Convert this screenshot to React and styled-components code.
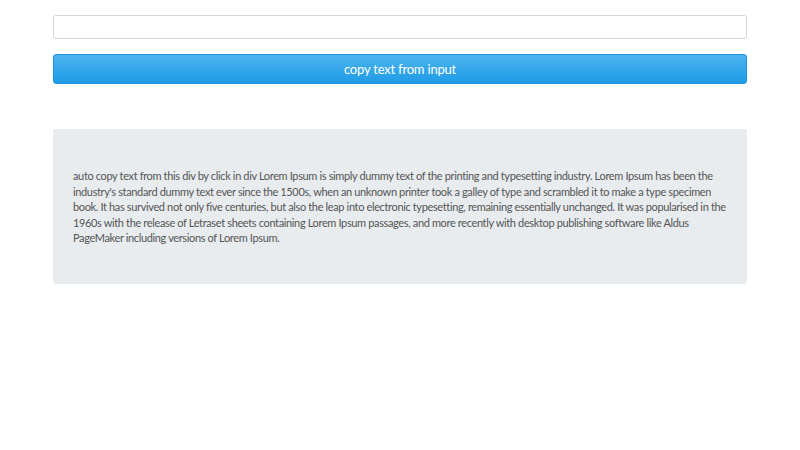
import React from "react";
import styled, { createGlobalStyle } from "styled-components";

const Global = createGlobalStyle`
  html, body { margin: 0; padding: 0; background: #fff; }
  body { font-family: Lato, "Open Sans", sans-serif; }
  * { box-sizing: border-box; }
`;

const Page = styled.div`
  width: 800px;
  padding: 15px 53px;
  display: flex;
  flex-direction: column;
`;

const Input = styled.input`
  height: 24px;
  width: 100%;
  border: 1px solid #d6d6d6;
  border-radius: 3px;
  background: #fff;
  outline: none;
  padding: 0 8px;
  font-family: inherit;
`;

const Button = styled.button`
  margin-top: 15px;
  height: 30px;
  width: 100%;
  border: 1px solid #1f92d9;
  border-radius: 3px;
  background: linear-gradient(to bottom, #4db4ef 0%, #1e9be6 100%);
  color: #fff;
  font-family: inherit;
  font-size: 13px;
  letter-spacing: -0.2px;
  cursor: pointer;
  padding: 0;
`;

const TextBox = styled.div`
  margin-top: 45px;
  height: 155px;
  background: #e8ecef;
  border-radius: 3px;
  padding: 39px 20px 0;
  color: #555;
  font-size: 11px;
  letter-spacing: -0.36px;
  line-height: 15.5px;
`;

export default function App() {
  return (
    <>
      <Global />
      <Page>
        <Input type="text" />
        <Button>copy text from input</Button>
        <TextBox>
          auto copy text from this div by click in div Lorem Ipsum is simply dummy text of the printing and typesetting industry. Lorem Ipsum has been the industry's standard dummy text ever since the 1500s, when an unknown printer took a galley of type and scrambled it to make a type specimen book. It has survived not only five centuries, but also the leap into electronic typesetting, remaining essentially unchanged. It was popularised in the 1960s with the release of Letraset sheets containing Lorem Ipsum passages, and more recently with desktop publishing software like Aldus PageMaker including versions of Lorem Ipsum.
        </TextBox>
      </Page>
    </>
  );
}
